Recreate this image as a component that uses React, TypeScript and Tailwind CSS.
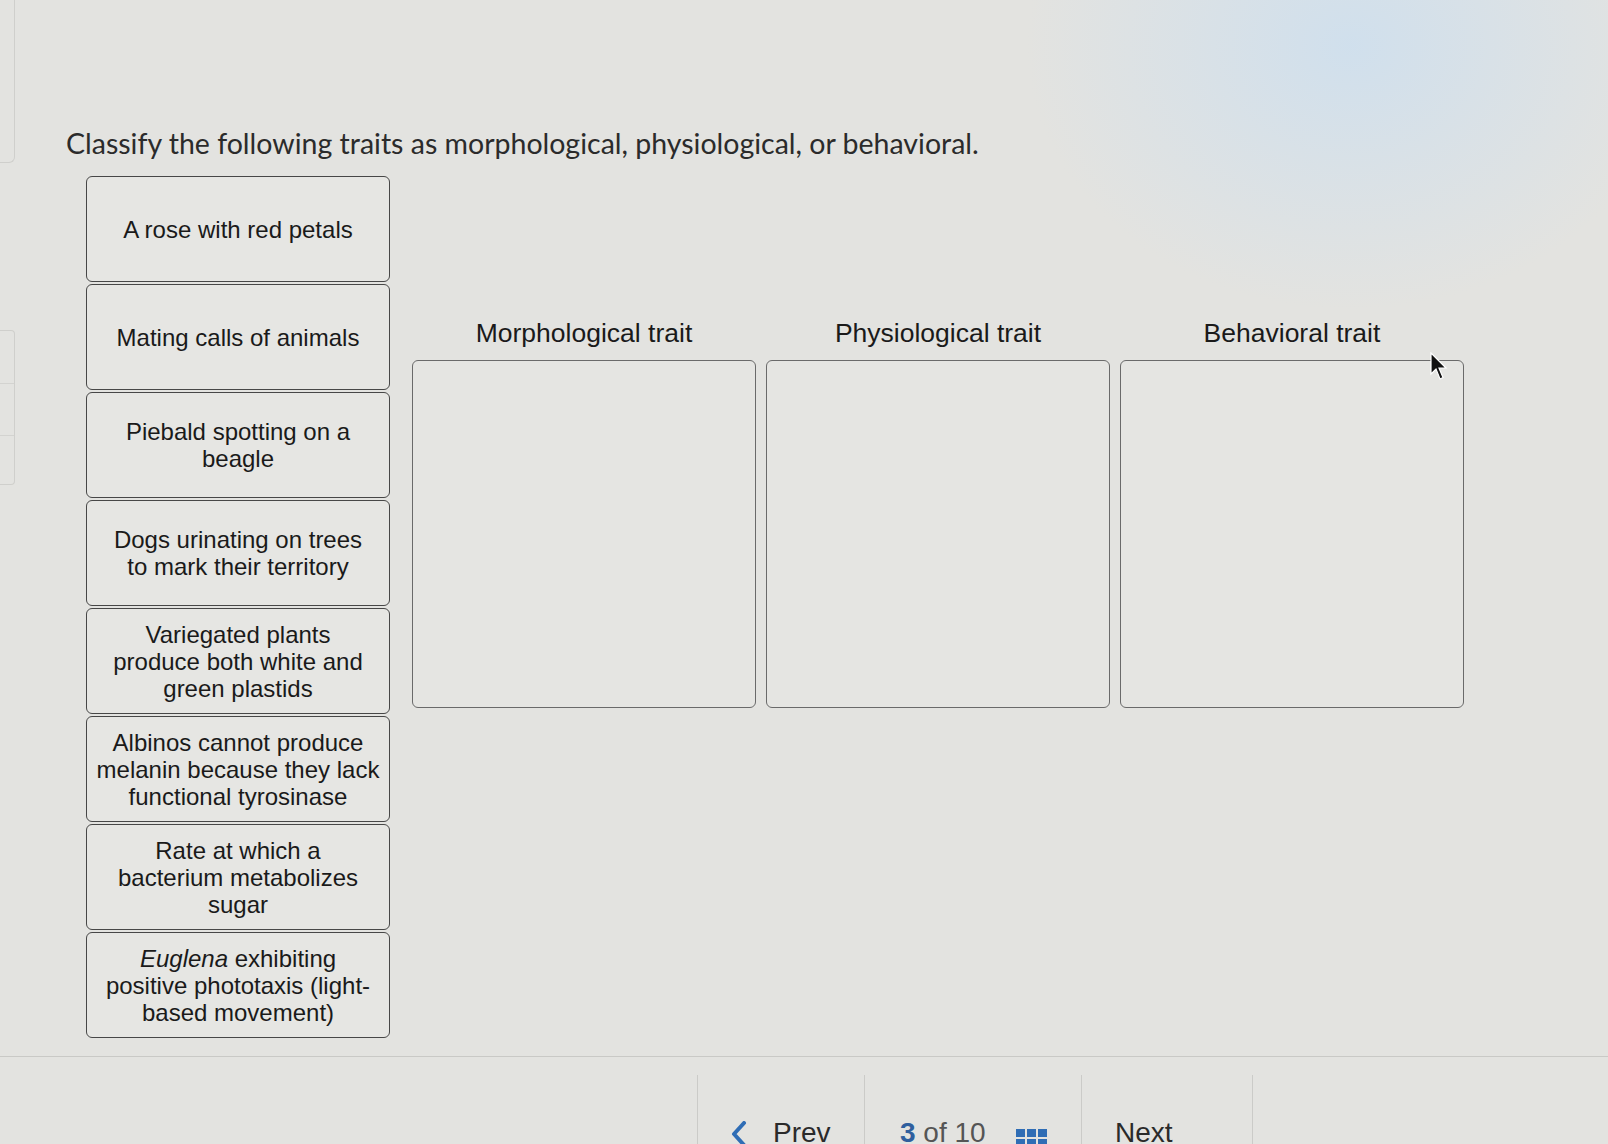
import React from "react";

// each trait card, split into the lines shown in the reference
const traits: React.ReactNode[][] = [
  ["A rose with red petals"],
  ["Mating calls of animals"],
  ["Piebald spotting on a", "beagle"],
  ["Dogs urinating on trees", "to mark their territory"],
  ["Variegated plants", "produce both white and", "green plastids"],
  ["Albinos cannot produce", "melanin because they lack", "functional tyrosinase"],
  ["Rate at which a", "bacterium metabolizes", "sugar"],
  [
    <>
      <i>Euglena</i> exhibiting
    </>,
    "positive phototaxis (light-",
    "based movement)",
  ],
];

const categories = ["Morphological trait", "Physiological trait", "Behavioral trait"];

function Cursor() {
  return (
    <svg width="20" height="30" viewBox="0 0 20 30" className="absolute left-[1430px] top-[352px]">
      <path d="M1 1 L1 22 L6 17 L10 27 L13 25.5 L9 16 L16 16 Z" fill="#111" stroke="#fff" strokeWidth="1.2" />
    </svg>
  );
}

export default function App() {
  return (
    <div className="relative h-[1144px] w-full overflow-hidden bg-[#e3e3e0] bg-[radial-gradient(ellipse_at_84%_4%,rgba(200,222,242,0.7),rgba(227,227,224,0)_17%)] font-['Liberation_Sans',Arial,sans-serif] text-[#222]">
      <div className="flex h-[1056px]">
        {/* left sidebar edge */}
        <div className="flex w-[15px] shrink-0 flex-col">
          <div className="h-[163px] rounded-br-[6px] border-r border-b border-[#cfcfcc]" />
          <div className="mt-[167px] flex h-[155px] flex-col rounded-r-[4px] border border-l-0 border-[#cfcfcc]">
            <div className="h-[53px] border-b border-[#d3d3d0]" />
            <div className="h-[52px] border-b border-[#d3d3d0]" />
            <div className="flex-1" />
          </div>
        </div>

        <div className="flex-1 pl-[51px] pt-[127px]">
          <h1 className="font-['Lato',sans-serif] text-[28.5px] leading-[33px] text-[#2b2b2b]">
            Classify the following traits as morphological, physiological, or behavioral.
          </h1>

          <div className="mt-[16px] flex gap-[22px] pl-[20px]">
            {/* draggable traits */}
            <div className="flex w-[304px] flex-col gap-[2px]">
              {traits.map((lines, i) => (
                <div
                  key={i}
                  className="flex h-[106px] flex-col items-center justify-center rounded-[6px] border-[1.5px] border-[#474747] bg-[#e6e6e3] text-center text-[24px] leading-[27px] whitespace-nowrap text-[#1a1a1a]"
                >
                  {lines.map((l, j) => (
                    <span key={j}>{l}</span>
                  ))}
                </div>
              ))}
            </div>

            {/* drop targets */}
            <div className="flex gap-[10px] pt-[142px]">
              {categories.map((c) => (
                <div key={c} className="flex w-[344px] flex-col">
                  <div className="h-[30px] text-center text-[26.5px] leading-[30px] text-[#1a1a1a]">{c}</div>
                  <div className="mt-[12px] h-[348px] rounded-[6px] border-[1.5px] border-[#6a6a6a] bg-[#e5e5e2]" />
                </div>
              ))}
            </div>
          </div>
        </div>
      </div>

      {/* footer nav */}
      <div className="flex h-[88px] border-t-[1.5px] border-[#c9c9c6] pt-[18px]">
        <div className="w-[697px]" />
        <div className="flex w-[167px] items-start gap-[26px] border-l border-[#cbcbc8] pl-[33px] pt-[42px]">
          <svg width="16" height="26" viewBox="0 0 16 26" className="mt-[4px]">
            <path d="M13 2 L3 13 L13 24" fill="none" stroke="#2f6db5" strokeWidth="4" strokeLinecap="round" strokeLinejoin="round" />
          </svg>
          <span className="text-[28px] leading-[32px] text-[#2a2a2a]">Prev</span>
        </div>
        <div className="flex w-[217px] items-start border-l border-[#cbcbc8] pl-[35px] pt-[42px]">
          <span className="text-[28px] leading-[32px] text-[#555]">
            <span className="font-bold text-[#2f5f9e]">3</span> of 10
          </span>
          <div className="ml-[30px] mt-[12px] grid grid-cols-3 gap-[2px]">
            {Array.from({ length: 9 }).map((_, i) => (
              <div key={i} className="h-[8px] w-[9px] bg-[#2f6db5]" />
            ))}
          </div>
        </div>
        <div className="flex w-[171px] items-start border-l border-[#cbcbc8] pl-[33px] pt-[42px]">
          <span className="text-[28px] leading-[32px] text-[#2a2a2a]">Next</span>
        </div>
        <div className="flex-1 border-l border-[#cbcbc8]" />
      </div>

      <Cursor />
    </div>
  );
}
